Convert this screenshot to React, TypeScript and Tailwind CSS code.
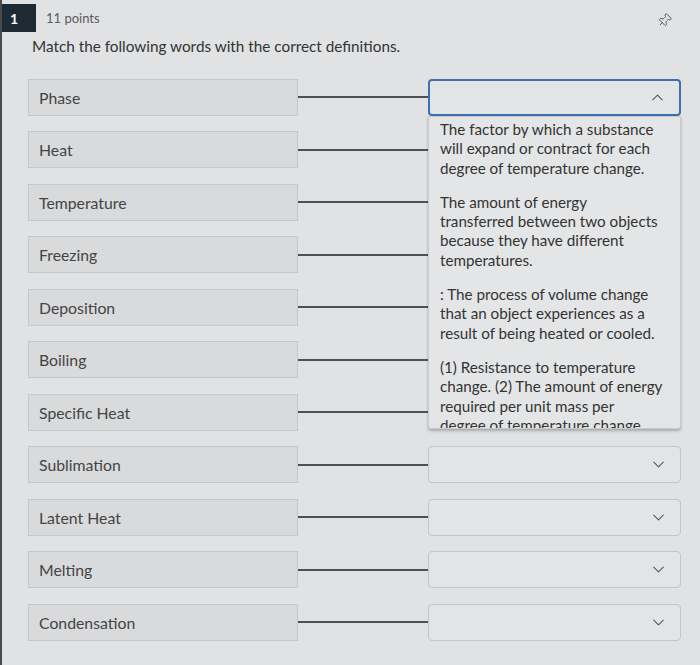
import { Pin, ChevronDown, ChevronUp } from "lucide-react";

const words = [
  "Phase",
  "Heat",
  "Temperature",
  "Freezing",
  "Deposition",
  "Boiling",
  "Specific Heat",
  "Sublimation",
  "Latent Heat",
  "Melting",
  "Condensation",
];

// line breaks follow the wrapping in the open list
const options = [
  ["The factor by which a substance", "will expand or contract for each", "degree of temperature change."],
  ["The amount of energy", "transferred between two objects", "because they have different", "temperatures."],
  [": The process of volume change", "that an object experiences as a", "result of being heated or cooled."],
  ["(1) Resistance to temperature", "change. (2) The amount of energy", "required per unit mass per", "degree of temperature change."],
];

function OpenSelect() {
  return (
    <div className="relative w-[253px] h-[37px] rounded-[4px] border-2 border-[#3f6fae] bg-[#e3e4e5] flex items-center justify-end pr-[12px]">
      <ChevronUp className="w-[19px] h-[19px] text-[#555]" strokeWidth={1.3} />
      {/* open option list */}
      <div className="absolute left-[-2px] top-[35px] w-[253px] h-[313px] overflow-hidden bg-[#e4e5e6] border border-[#c9cacb] rounded-b-[3px] shadow-[0_2px_3px_rgba(0,0,0,0.25)] z-10 pt-[3px] pl-[11px] pr-[6px]">
        {options.map((o) => (
          <div key={o[0]} className="text-[15.2px] leading-[19.3px] text-[#333] pb-[15px] whitespace-nowrap">
            {o.map((line) => (
              <div key={line}>{line}</div>
            ))}
          </div>
        ))}
      </div>
    </div>
  );
}

function ClosedSelect() {
  return (
    <div className="w-[253px] h-[37px] rounded-[4px] border border-[#c4c5c6] bg-[#e3e4e5] flex items-center justify-end pr-[12px]">
      <ChevronDown className="w-[19px] h-[19px] text-[#555]" strokeWidth={1.3} />
    </div>
  );
}

export default function App() {
  return (
    <div
      className="relative w-[700px] h-[665px] overflow-hidden bg-[#e1e2e3] border-l-2 border-[#4a4a4a]"
      style={{ fontFamily: "Lato, 'Open Sans', sans-serif" }}
    >
      {/* header */}
      <div className="flex items-center pt-[4px]">
        <div className="w-[34px] h-[28px] bg-[#1e2a33] text-white text-[14px] font-bold flex items-center pl-[8px]">
          1
        </div>
        <div className="ml-[10px] mt-[2px] text-[13px] text-[#5b5b5b]">11 points</div>
        <div className="ml-auto mr-[28px] mt-[4px]">
          <Pin className="w-[15px] h-[15px] text-[#555] rotate-45" strokeWidth={1.5} />
        </div>
      </div>
      <div className="pl-[30px] mt-[3px] text-[15.3px] text-[#333]">
        Match the following words with the correct definitions.
      </div>

      {/* rows */}
      <div className="flex flex-col gap-[15.5px] mt-[21px] pl-[26px]">
        {words.map((w, i) => (
          <div key={w} className="flex items-center">
            <div className="w-[270px] h-[37px] bg-[#d9dadb] border border-[#c6c7c8] flex items-center pl-[10px] text-[15.8px] text-[#444]">
              {w}
            </div>
            <div className="w-[130px] h-[2px] bg-[#505050]" />
            {i === 0 ? <OpenSelect /> : i >= 7 ? <ClosedSelect /> : <div className="w-[253px] h-[37px]" />}
          </div>
        ))}
      </div>
    </div>
  );
}
